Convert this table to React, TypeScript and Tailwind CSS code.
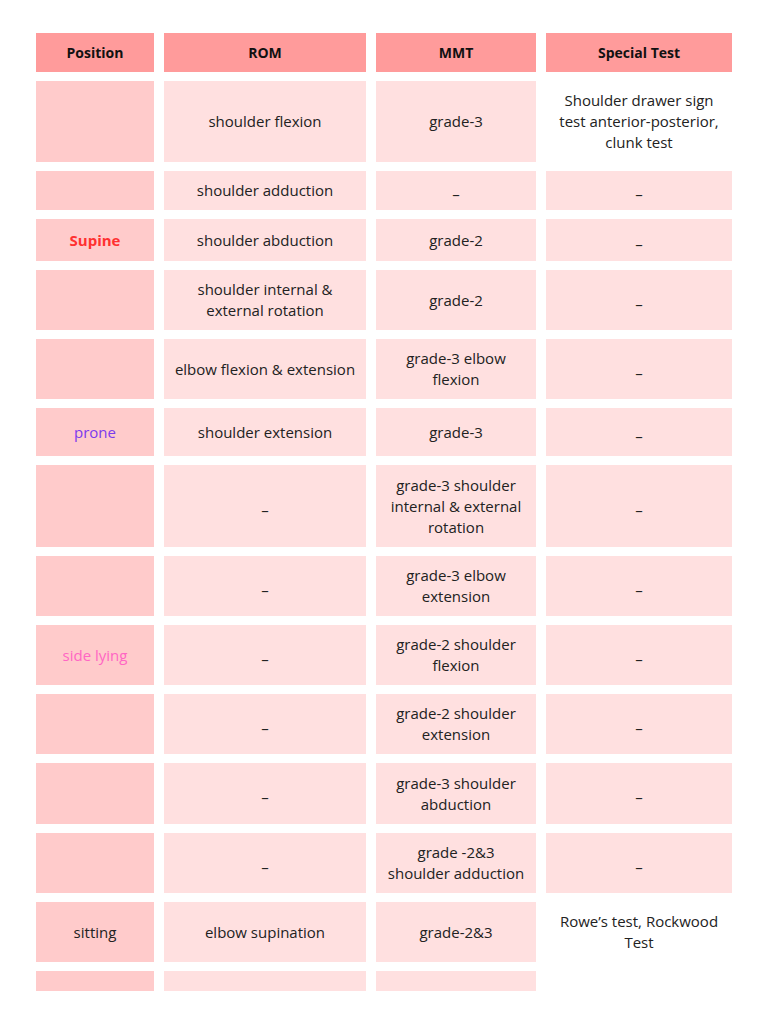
import type { ReactNode } from "react";

type Row = {
  h: string;
  position?: { text: string; cls: string };
  rom: ReactNode;
  mmt: ReactNode;
  special: ReactNode;
  plainSpecial?: boolean;
};

const rows: Row[] = [
  {
    h: "h-[81px]",
    rom: "shoulder flexion",
    mmt: "grade-3",
    special: "Shoulder drawer sign test anterior-posterior, clunk test",
    plainSpecial: true,
  },
  { h: "h-[39px]", rom: "shoulder adduction", mmt: "–", special: "–" },
  {
    h: "h-[42px]",
    position: { text: "Supine", cls: "font-bold text-[#ff3131]" },
    rom: "shoulder abduction",
    mmt: "grade-2",
    special: "–",
  },
  { h: "h-[60px]", rom: "shoulder internal & external rotation", mmt: "grade-2", special: "–" },
  { h: "h-[60px]", rom: "elbow flexion & extension", mmt: "grade-3 elbow flexion", special: "–" },
  {
    h: "h-[48px]",
    position: { text: "prone", cls: "text-[#7c3aed]" },
    rom: "shoulder extension",
    mmt: "grade-3",
    special: "–",
  },
  { h: "h-[82px]", rom: "–", mmt: "grade-3 shoulder internal & external rotation", special: "–" },
  { h: "h-[60px]", rom: "–", mmt: "grade-3 elbow extension", special: "–" },
  {
    h: "h-[60px]",
    position: { text: "side lying", cls: "text-[#ff66c4]" },
    rom: "–",
    mmt: "grade-2 shoulder flexion",
    special: "–",
  },
  { h: "h-[60px]", rom: "–", mmt: "grade-2 shoulder extension", special: "–" },
  { h: "h-[61px]", rom: "–", mmt: "grade-3 shoulder abduction", special: "–" },
  {
    h: "h-[60px]",
    rom: "–",
    mmt: (
      <>
        grade -2&3
        <br />
        shoulder adduction
      </>
    ),
    special: "–",
  },
  {
    h: "h-[60px]",
    position: { text: "sitting", cls: "text-[#222]" },
    rom: "elbow supination",
    mmt: "grade-2&3",
    special: "Rowe’s test, Rockwood Test",
    plainSpecial: true,
  },
];

function Cell({ children, className }: { children?: ReactNode; className: string }) {
  return (
    <div
      className={`flex items-center justify-center px-2 text-center text-[15px] leading-[21px] text-[#222] ${className}`}
    >
      {children === "–" ? <span className="inline-block translate-y-[4px]">–</span> : children}
    </div>
  );
}

export default function App() {
  return (
    <div
      className="min-h-[1024px] w-[768px] bg-white pl-[36px] pt-[33px]"
      style={{ fontFamily: '"Open Sans", "Liberation Sans", sans-serif' }}
    >
      <div className="flex flex-col gap-[9px]">
        <div className="grid h-[39px] grid-cols-[118px_202px_160px_186px] gap-x-[10px]">
          {["Position", "ROM", "MMT", "Special Test"].map((title) => (
            <Cell key={title} className="bg-[#ff9b9b] !text-[14px] font-bold !text-[#111]">
              {title}
            </Cell>
          ))}
        </div>

        {rows.map((row, i) => (
          <div key={i} className={`grid grid-cols-[118px_202px_160px_186px] gap-x-[10px] ${row.h}`}>
            <Cell className="bg-[#ffcbcb]">
              {row.position && <span className={row.position.cls}>{row.position.text}</span>}
            </Cell>
            <Cell className="bg-[#ffe0e0]">{row.rom}</Cell>
            <Cell className="bg-[#ffe0e0]">{row.mmt}</Cell>
            <Cell className={row.plainSpecial ? "bg-white" : "bg-[#ffe0e0]"}>{row.special}</Cell>
          </div>
        ))}

        <div className="grid h-[20px] grid-cols-[118px_202px_160px_186px] gap-x-[10px]">
          <Cell className="bg-[#ffcbcb]" />
          <Cell className="bg-[#ffe0e0]" />
          <Cell className="bg-[#ffe0e0]" />
          <Cell className="bg-white" />
        </div>
      </div>
    </div>
  );
}
